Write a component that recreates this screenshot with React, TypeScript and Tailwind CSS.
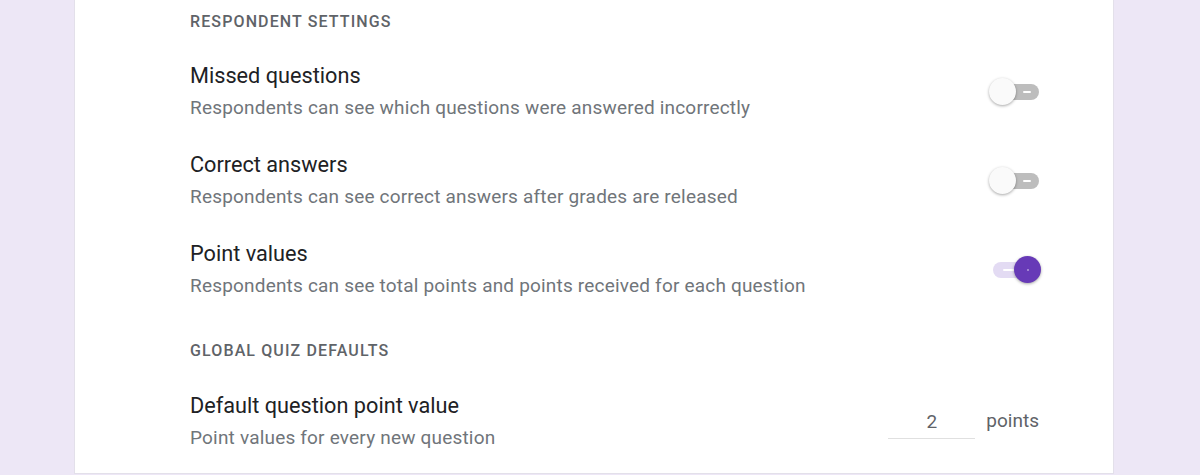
const font = { fontFamily: "Roboto, 'Noto Sans', sans-serif" };

type SettingRow = {
  title: string;
  text: string;
  on: boolean;
};

const rows: SettingRow[] = [
  {
    title: "Missed questions",
    text: "Respondents can see which questions were answered incorrectly",
    on: false,
  },
  {
    title: "Correct answers",
    text: "Respondents can see correct answers after grades are released",
    on: false,
  },
  {
    title: "Point values",
    text: "Respondents can see total points and points received for each question",
    on: true,
  },
];

function Toggle({ on }: { on: boolean }) {
  return (
    <div className="relative h-[28px] w-[54px] shrink-0">
      <div
        className={
          on
            ? "absolute left-[6px] right-[4px] top-[7px] h-[16px] rounded-full bg-[#e3dbf3]"
            : "absolute left-[6px] right-[2px] top-[7px] h-[16px] rounded-full bg-[#bdbdbd]"
        }
      />
      {on ? (
        <>
          <div className="absolute left-[16px] top-[14px] h-[2px] w-[12px] rounded-full bg-white" />
          <div className="absolute right-[0px] top-[1px] flex h-[27px] w-[27px] items-center justify-center rounded-full bg-[#673ab7] shadow-[0_1px_3px_rgba(0,0,0,0.35)]">
            <div className="h-[2px] w-[2px] rounded-full bg-[#b39ddb]" />
          </div>
        </>
      ) : (
        <>
          <div className="absolute right-[10px] top-[14px] h-[2px] w-[8px] rounded-full bg-white" />
          <div className="absolute left-[2px] top-[1px] h-[27px] w-[27px] rounded-full bg-[#fafafa] shadow-[0_1px_3px_rgba(0,0,0,0.35)]" />
        </>
      )}
    </div>
  );
}

function SectionHeader({ children }: { children: string }) {
  return (
    <p className="text-[16px] leading-[20px] font-medium uppercase tracking-[0.07em] text-[#5f6368]">
      {children}
    </p>
  );
}

function RowText({ title, text }: { title: string; text: string }) {
  return (
    <div className="min-w-0">
      <p className="text-[21.7px] leading-[28px] text-[#202124]">{title}</p>
      <p className="mt-[6px] text-[19px] leading-[24px] tracking-[0.01em] text-[#70757a]">{text}</p>
    </div>
  );
}

export default function App() {
  return (
    <div className="h-[475px] w-full overflow-hidden bg-[#ede7f6]" style={font}>
      <div className="ml-[74px] h-[474px] w-[1040px] border-x border-b border-[#e3e0ea] bg-white">
        <div className="pl-[115px] pr-[72px] pt-[12px]">
          <SectionHeader>Respondent settings</SectionHeader>

          <div className="mt-[30px] flex flex-col gap-[31px]">
            {rows.map((r) => (
              <div key={r.title} className="flex items-center justify-between">
                <RowText title={r.title} text={r.text} />
                <Toggle on={r.on} />
              </div>
            ))}
          </div>

          <div className="mt-[43px]">
            <SectionHeader>Global quiz defaults</SectionHeader>
          </div>

          <div className="mt-[31px] flex items-center justify-between">
            <RowText
              title="Default question point value"
              text="Point values for every new question"
            />
            <div className="mr-[2px] flex items-center gap-[11px]">
              <div className="mt-[6px] w-[87px] border-b border-[#e0e0e0] pb-[3px] text-center text-[19px] leading-[26px] text-[#5f6368]">
                2
              </div>
              <span className="text-[19px] leading-[24px] text-[#5f6368]">points</span>
            </div>
          </div>
        </div>
      </div>
    </div>
  );
}
